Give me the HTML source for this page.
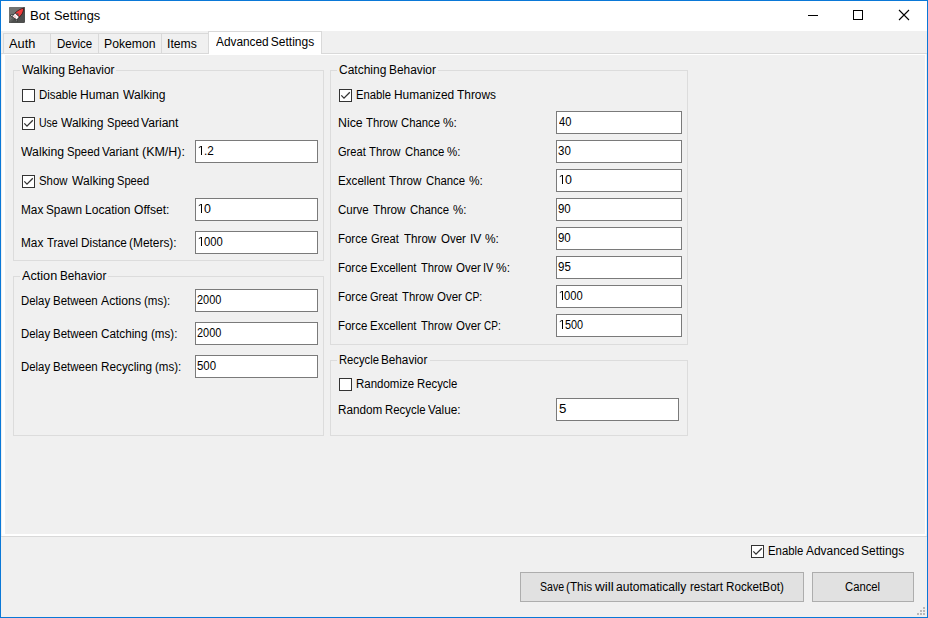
<!DOCTYPE html>
<html><head><meta charset="utf-8">
<style>
html,body{margin:0;padding:0;}
body{width:928px;height:618px;overflow:hidden;position:relative;background:#f0f0f0;font-family:"Liberation Sans",sans-serif;}
.a{position:absolute;box-sizing:border-box;}
.t{position:absolute;white-space:nowrap;font-size:12px;line-height:14px;height:14px;color:#000;transform-origin:0 0;}
.tab{position:absolute;box-sizing:border-box;background:#f0f0f0;border:1px solid #d9d9d9;border-bottom:none;}
.grp{position:absolute;box-sizing:border-box;border:1px solid #dcdcdc;}
.gap{position:absolute;height:3px;background:#f0f0f0;}
.tb{position:absolute;box-sizing:border-box;background:#fff;border:1px solid #7a7a7a;height:23px;}
.cb{position:absolute;box-sizing:border-box;background:#fff;border:1px solid #333;width:13px;height:13px;}
.btn{position:absolute;box-sizing:border-box;background:#e1e1e1;border:1px solid #adadad;}
</style></head><body>
<!-- window frame -->
<div class="a" style="left:0;top:0;width:928px;height:618px;border:1px solid #0a78d7;"></div>
<div class="a" style="left:1px;top:1px;width:926px;height:30px;background:#fff;"></div>
<!-- icon -->
<svg class="a" style="left:9px;top:7px" width="16" height="16" viewBox="0 0 16 16">
<rect x="0" y="0" width="16" height="16" rx="1.2" fill="#4e4f4e"/>
<path d="M1.2,0 L15,0 L0,15 L0,1.2 Z" fill="#727472"/>
<path d="M15,0 L16,0 L16,1 L1,16 L0,16 L0,15 Z" fill="#5e605e"/>
<g stroke="#111" stroke-width="0.65" stroke-linejoin="round">
<path d="M4.8,7.4 L1.1,8.3 L3.2,10.2 Z" fill="#fff"/>
<path d="M8.8,11.6 L7.9,14.4 L6.0,12.3 Z" fill="#fff"/>
<path d="M6.2,5.8 L10.4,9.8 L7.8,12.8 L3.1,9.5 Z" fill="#fbf4f4"/>
<path d="M14.7,1.1 C12,1.6 8.8,3.4 6.2,5.9 L10.4,9.8 C12.9,8.2 14.5,5 14.7,1.1 Z" fill="#f03c3c"/>
</g>
<rect x="7.9" y="6.4" width="1.6" height="1.6" fill="#4a5258" transform="rotate(45 8.7 7.2)"/>
<circle cx="5.8" cy="9.8" r="1.2" fill="#f2c8c8"/>
</svg>
<!-- caption buttons -->
<div class="a" style="left:808px;top:15px;width:10px;height:1px;background:#000;"></div>
<div class="a" style="left:853px;top:10px;width:10px;height:10px;border:1px solid #000;"></div>
<svg class="a" style="left:898px;top:9px" width="12" height="12" viewBox="0 0 12 12"><path d="M1,1 L11,11 M11,1 L1,11" stroke="#000" stroke-width="1.1" fill="none"/></svg>

<!-- tab pane -->
<div class="a" style="left:1px;top:53px;width:926px;height:1px;background:#d9d9d9;"></div>
<div class="a" style="left:2px;top:54px;width:924px;height:482px;background:#fff;"></div>
<div class="a" style="left:5px;top:55px;width:920px;height:479px;background:#f0f0f0;"></div>
<div class="a" style="left:1px;top:536px;width:926px;height:1px;background:#d9d9d9;"></div>
<!-- tabs -->
<div class="tab" style="left:3px;top:33px;width:48px;height:20px;"></div>
<div class="tab" style="left:50px;top:33px;width:49px;height:20px;"></div>
<div class="tab" style="left:98px;top:33px;width:64px;height:20px;"></div>
<div class="tab" style="left:161px;top:33px;width:48px;height:20px;"></div>
<div class="tab" style="left:208px;top:31px;width:114px;height:23px;background:#fff;"></div>

<!-- groups -->
<div class="grp" style="left:13px;top:70px;width:311px;height:191px;"></div>
<div class="gap" style="left:20px;top:69px;width:96px;"></div>
<div class="grp" style="left:13px;top:276px;width:311px;height:160px;"></div>
<div class="gap" style="left:20px;top:275px;width:88px;"></div>
<div class="grp" style="left:330px;top:70px;width:358px;height:275px;"></div>
<div class="gap" style="left:337px;top:69px;width:101px;"></div>
<div class="grp" style="left:330px;top:360px;width:358px;height:76px;"></div>
<div class="gap" style="left:337px;top:359px;width:93px;"></div>

<!-- checkboxes -->
<div class="cb" style="left:22px;top:89px;"></div>
<div class="cb" style="left:22px;top:117px;"></div>
<div class="cb" style="left:22px;top:175px;"></div>
<div class="cb" style="left:339px;top:89px;"></div>
<div class="cb" style="left:339px;top:378px;"></div>
<div class="cb" style="left:751px;top:545px;"></div>
<svg class="a" style="left:22px;top:117px" width="13" height="13" viewBox="0 0 13 13"><path d="M2.3,6.4 L5,9.1 L10.8,3.3" stroke="#333" stroke-width="1.3" fill="none"/></svg>
<svg class="a" style="left:22px;top:175px" width="13" height="13" viewBox="0 0 13 13"><path d="M2.3,6.4 L5,9.1 L10.8,3.3" stroke="#333" stroke-width="1.3" fill="none"/></svg>
<svg class="a" style="left:339px;top:89px" width="13" height="13" viewBox="0 0 13 13"><path d="M2.3,6.4 L5,9.1 L10.8,3.3" stroke="#333" stroke-width="1.3" fill="none"/></svg>
<svg class="a" style="left:751px;top:545px" width="13" height="13" viewBox="0 0 13 13"><path d="M2.3,6.4 L5,9.1 L10.8,3.3" stroke="#333" stroke-width="1.3" fill="none"/></svg>

<!-- textboxes -->
<div class="tb" style="left:195px;top:140px;width:123px;"></div>
<div class="tb" style="left:195px;top:198px;width:123px;"></div>
<div class="tb" style="left:195px;top:231px;width:123px;"></div>
<div class="tb" style="left:195px;top:289px;width:123px;"></div>
<div class="tb" style="left:195px;top:322px;width:123px;"></div>
<div class="tb" style="left:195px;top:355px;width:123px;"></div>
<div class="tb" style="left:556px;top:111px;width:126px;"></div>
<div class="tb" style="left:556px;top:140px;width:126px;"></div>
<div class="tb" style="left:556px;top:169px;width:126px;"></div>
<div class="tb" style="left:556px;top:198px;width:126px;"></div>
<div class="tb" style="left:556px;top:227px;width:126px;"></div>
<div class="tb" style="left:556px;top:256px;width:126px;"></div>
<div class="tb" style="left:556px;top:285px;width:126px;"></div>
<div class="tb" style="left:556px;top:314px;width:126px;"></div>

<div class="tb" style="left:556px;top:398px;width:123px;"></div>

<!-- buttons -->
<div class="btn" style="left:520px;top:572px;width:284px;height:30px;"></div>
<div class="btn" style="left:812px;top:572px;width:102px;height:30px;"></div>
<!-- size grip -->
<div class="a" style="left:923px;top:607px;width:2px;height:2px;background:#b8b8b8;"></div><div class="a" style="left:920px;top:610px;width:2px;height:2px;background:#b8b8b8;"></div><div class="a" style="left:923px;top:610px;width:2px;height:2px;background:#b8b8b8;"></div><div class="a" style="left:917px;top:613px;width:2px;height:2px;background:#b8b8b8;"></div><div class="a" style="left:920px;top:613px;width:2px;height:2px;background:#b8b8b8;"></div><div class="a" style="left:923px;top:613px;width:2px;height:2px;background:#b8b8b8;"></div>

<div class="t" style="left:30.15px;top:9px;transform:scaleX(1.0983)">Bot</div>
<div class="t" style="left:53.58px;top:9px;transform:scaleX(1.0666)">Settings</div>
<div class="t" style="left:8.78px;top:37px;transform:scaleX(1.0655)">Auth</div>
<div class="t" style="left:57.17px;top:37px;transform:scaleX(0.9598)">Device</div>
<div class="t" style="left:104.42px;top:37px;transform:scaleX(1.0189)">Pokemon</div>
<div class="t" style="left:167.26px;top:37px;transform:scaleX(1.0164)">Items</div>
<div class="t" style="left:216.10px;top:35px;transform:scaleX(0.9870)">Advanced</div>
<div class="t" style="left:270.84px;top:35px;transform:scaleX(1.0000)">Settings</div>
<div class="t" style="left:21.94px;top:63px;transform:scaleX(1.0176)">Walking</div>
<div class="t" style="left:67.55px;top:63px;transform:scaleX(0.9794)">Behavior</div>
<div class="t" style="left:39.08px;top:88px;transform:scaleX(0.9520)">Disable</div>
<div class="t" style="left:79.73px;top:88px;transform:scaleX(1.0089)">Human</div>
<div class="t" style="left:122.64px;top:88px;transform:scaleX(1.0080)">Walking</div>
<div class="t" style="left:38.98px;top:116px;transform:scaleX(0.8771)">Use</div>
<div class="t" style="left:61.24px;top:116px;transform:scaleX(1.0031)">Walking</div>
<div class="t" style="left:106.59px;top:116px;transform:scaleX(0.9290)">Speed</div>
<div class="t" style="left:141.49px;top:116px;transform:scaleX(1.0092)">Variant</div>
<div class="t" style="left:21.24px;top:145px;transform:scaleX(1.0201)">Walking</div>
<div class="t" style="left:66.78px;top:145px;transform:scaleX(0.9440)">Speed</div>
<div class="t" style="left:102.20px;top:145px;transform:scaleX(0.9822)">Variant</div>
<div class="t" style="left:142.34px;top:145px;transform:scaleX(1.0387)">(KM/H):</div>
<div class="t" style="left:38.98px;top:174px;transform:scaleX(0.9470)">Show</div>
<div class="t" style="left:71.74px;top:174px;transform:scaleX(1.0080)">Walking</div>
<div class="t" style="left:116.79px;top:174px;transform:scaleX(0.9260)">Speed</div>
<div class="t" style="left:20.85px;top:203px;transform:scaleX(0.9857)">Max</div>
<div class="t" style="left:46.35px;top:203px;transform:scaleX(0.9811)">Spawn</div>
<div class="t" style="left:85.03px;top:203px;transform:scaleX(1.0040)">Location</div>
<div class="t" style="left:133.86px;top:203px;transform:scaleX(1.0076)">Offset:</div>
<div class="t" style="left:20.85px;top:236px;transform:scaleX(0.9857)">Max</div>
<div class="t" style="left:46.71px;top:236px;transform:scaleX(0.9444)">Travel</div>
<div class="t" style="left:80.65px;top:236px;transform:scaleX(0.9819)">Distance</div>
<div class="t" style="left:128.78px;top:236px;transform:scaleX(0.9923)">(Meters):</div>
<div class="t" style="left:21.89px;top:269px;transform:scaleX(1.0556)">Action</div>
<div class="t" style="left:59.85px;top:269px;transform:scaleX(0.9772)">Behavior</div>
<div class="t" style="left:20.88px;top:294px;transform:scaleX(0.9474)">Delay</div>
<div class="t" style="left:53.07px;top:294px;transform:scaleX(0.9587)">Between</div>
<div class="t" style="left:101.19px;top:294px;transform:scaleX(1.0165)">Actions</div>
<div class="t" style="left:143.90px;top:294px;transform:scaleX(0.9624)">(ms):</div>
<div class="t" style="left:20.88px;top:327px;transform:scaleX(0.9474)">Delay</div>
<div class="t" style="left:53.07px;top:327px;transform:scaleX(0.9587)">Between</div>
<div class="t" style="left:101.11px;top:327px;transform:scaleX(0.9808)">Catching</div>
<div class="t" style="left:150.60px;top:327px;transform:scaleX(0.9663)">(ms):</div>
<div class="t" style="left:20.88px;top:360px;transform:scaleX(0.9474)">Delay</div>
<div class="t" style="left:53.07px;top:360px;transform:scaleX(0.9587)">Between</div>
<div class="t" style="left:101.05px;top:360px;transform:scaleX(0.9795)">Recycling</div>
<div class="t" style="left:155.00px;top:360px;transform:scaleX(0.9624)">(ms):</div>
<div class="t" style="left:339.00px;top:63px;transform:scaleX(1.0003)">Catching</div>
<div class="t" style="left:389.04px;top:63px;transform:scaleX(0.9902)">Behavior</div>
<div class="t" style="left:355.89px;top:88px;transform:scaleX(0.9406)">Enable</div>
<div class="t" style="left:393.84px;top:88px;transform:scaleX(0.9921)">Humanized</div>
<div class="t" style="left:456.70px;top:88px;transform:scaleX(0.9908)">Throws</div>
<div class="t" style="left:337.91px;top:116px;transform:scaleX(1.0285)">Nice</div>
<div class="t" style="left:365.80px;top:116px;transform:scaleX(0.9464)">Throw</div>
<div class="t" style="left:400.84px;top:116px;transform:scaleX(0.9427)">Chance</div>
<div class="t" style="left:442.56px;top:116px;transform:scaleX(0.9892)">%:</div>
<div class="t" style="left:338.14px;top:145px;transform:scaleX(0.9235)">Great</div>
<div class="t" style="left:369.20px;top:145px;transform:scaleX(0.9464)">Throw</div>
<div class="t" style="left:404.93px;top:145px;transform:scaleX(0.9501)">Chance</div>
<div class="t" style="left:446.87px;top:145px;transform:scaleX(0.9578)">%:</div>
<div class="t" style="left:337.86px;top:174px;transform:scaleX(0.9687)">Excellent</div>
<div class="t" style="left:389.10px;top:174px;transform:scaleX(0.9735)">Throw</div>
<div class="t" style="left:426.43px;top:174px;transform:scaleX(0.9452)">Chance</div>
<div class="t" style="left:469.26px;top:174px;transform:scaleX(0.9892)">%:</div>
<div class="t" style="left:337.83px;top:203px;transform:scaleX(0.9605)">Curve</div>
<div class="t" style="left:372.60px;top:203px;transform:scaleX(0.9765)">Throw</div>
<div class="t" style="left:409.63px;top:203px;transform:scaleX(0.9452)">Chance</div>
<div class="t" style="left:453.37px;top:203px;transform:scaleX(0.9578)">%:</div>
<div class="t" style="left:337.87px;top:232px;transform:scaleX(0.9550)">Force</div>
<div class="t" style="left:371.04px;top:232px;transform:scaleX(0.9268)">Great</div>
<div class="t" style="left:403.60px;top:232px;transform:scaleX(0.9675)">Throw</div>
<div class="t" style="left:440.78px;top:232px;transform:scaleX(0.9585)">Over</div>
<div class="t" style="left:469.77px;top:232px;transform:scaleX(1.0096)">IV</div>
<div class="t" style="left:484.56px;top:232px;transform:scaleX(0.9892)">%:</div>
<div class="t" style="left:337.87px;top:261px;transform:scaleX(0.9550)">Force</div>
<div class="t" style="left:370.47px;top:261px;transform:scaleX(0.9561)">Excellent</div>
<div class="t" style="left:421.01px;top:261px;transform:scaleX(0.9314)">Throw</div>
<div class="t" style="left:455.78px;top:261px;transform:scaleX(0.9585)">Over</div>
<div class="t" style="left:483.27px;top:261px;transform:scaleX(0.9206)">IV</div>
<div class="t" style="left:496.15px;top:261px;transform:scaleX(0.9970)">%:</div>
<div class="t" style="left:337.87px;top:290px;transform:scaleX(0.9550)">Force</div>
<div class="t" style="left:369.85px;top:290px;transform:scaleX(0.9167)">Great</div>
<div class="t" style="left:401.71px;top:290px;transform:scaleX(0.9434)">Throw</div>
<div class="t" style="left:436.69px;top:290px;transform:scaleX(0.9546)">Over</div>
<div class="t" style="left:464.78px;top:290px;transform:scaleX(0.8609)">CP:</div>
<div class="t" style="left:337.87px;top:319px;transform:scaleX(0.9550)">Force</div>
<div class="t" style="left:370.47px;top:319px;transform:scaleX(0.9561)">Excellent</div>
<div class="t" style="left:421.11px;top:319px;transform:scaleX(0.9314)">Throw</div>
<div class="t" style="left:456.19px;top:319px;transform:scaleX(0.9546)">Over</div>
<div class="t" style="left:484.30px;top:319px;transform:scaleX(0.8340)">CP:</div>
<div class="t" style="left:338.99px;top:353px;transform:scaleX(0.9366)">Recycle</div>
<div class="t" style="left:381.45px;top:353px;transform:scaleX(0.9772)">Behavior</div>
<div class="t" style="left:355.87px;top:377px;transform:scaleX(0.9575)">Randomize</div>
<div class="t" style="left:416.98px;top:377px;transform:scaleX(0.9439)">Recycle</div>
<div class="t" style="left:337.95px;top:403px;transform:scaleX(0.9761)">Random</div>
<div class="t" style="left:384.88px;top:403px;transform:scaleX(0.9487)">Recycle</div>
<div class="t" style="left:427.60px;top:403px;transform:scaleX(0.9850)">Value:</div>
<div class="t" style="left:767.68px;top:544px;transform:scaleX(0.9461)">Enable</div>
<div class="t" style="left:806.10px;top:544px;transform:scaleX(0.9946)">Advanced</div>
<div class="t" style="left:861.04px;top:544px;transform:scaleX(0.9977)">Settings</div>
<div class="t" style="left:539.83px;top:580px;transform:scaleX(0.8803)">Save</div>
<div class="t" style="left:566.09px;top:580px;transform:scaleX(0.9810)">(This</div>
<div class="t" style="left:594.63px;top:580px;transform:scaleX(1.1269)">will</div>
<div class="t" style="left:616.27px;top:580px;transform:scaleX(1.0030)">automatically</div>
<div class="t" style="left:689.79px;top:580px;transform:scaleX(0.9691)">restart</div>
<div class="t" style="left:725.56px;top:580px;transform:scaleX(0.9732)">RocketBot)</div>
<div class="t" style="left:844.94px;top:580px;transform:scaleX(0.9402)">Cancel</div>
<svg class="a" style="left:198px;top:146px" width="5" height="9" viewBox="0 0 5 9"><path d="M3.5,0 L3.5,9" stroke="#000" stroke-width="1.05"/><path d="M0.8,1.6 L3.3,0.3" stroke="#000" stroke-width="0.95"/></svg>
<div class="t" style="left:203.71px;top:144px;transform:scaleX(0.9786)">.2</div>
<svg class="a" style="left:198px;top:204px" width="5" height="9" viewBox="0 0 5 9"><path d="M3.5,0 L3.5,9" stroke="#000" stroke-width="1.05"/><path d="M0.8,1.6 L3.3,0.3" stroke="#000" stroke-width="0.95"/></svg>
<div class="t" style="left:203.63px;top:202px;transform:scaleX(1.0348)">0</div>
<svg class="a" style="left:198px;top:237px" width="5" height="9" viewBox="0 0 5 9"><path d="M3.5,0 L3.5,9" stroke="#000" stroke-width="1.05"/><path d="M0.8,1.6 L3.3,0.3" stroke="#000" stroke-width="0.95"/></svg>
<div class="t" style="left:203.88px;top:235px;transform:scaleX(0.9359)">000</div>
<div class="t" style="left:197.46px;top:293px;transform:scaleX(0.9124)">2000</div>
<div class="t" style="left:197.46px;top:326px;transform:scaleX(0.9124)">2000</div>
<div class="t" style="left:197.35px;top:359px;transform:scaleX(0.9529)">500</div>
<div class="t" style="left:558.79px;top:115px;transform:scaleX(0.9276)">40</div>
<div class="t" style="left:558.40px;top:144px;transform:scaleX(0.9573)">30</div>
<svg class="a" style="left:559px;top:175px" width="5" height="9" viewBox="0 0 5 9"><path d="M3.5,0 L3.5,9" stroke="#000" stroke-width="1.05"/><path d="M0.8,1.6 L3.3,0.3" stroke="#000" stroke-width="0.95"/></svg>
<div class="t" style="left:564.63px;top:173px;transform:scaleX(1.0348)">0</div>
<div class="t" style="left:558.42px;top:202px;transform:scaleX(0.9552)">90</div>
<div class="t" style="left:558.42px;top:231px;transform:scaleX(0.9552)">90</div>
<div class="t" style="left:558.42px;top:260px;transform:scaleX(0.9587)">95</div>
<svg class="a" style="left:559px;top:291px" width="5" height="9" viewBox="0 0 5 9"><path d="M3.5,0 L3.5,9" stroke="#000" stroke-width="1.05"/><path d="M0.8,1.6 L3.3,0.3" stroke="#000" stroke-width="0.95"/></svg>
<div class="t" style="left:564.38px;top:289px;transform:scaleX(0.9307)">000</div>
<svg class="a" style="left:559px;top:320px" width="5" height="9" viewBox="0 0 5 9"><path d="M3.5,0 L3.5,9" stroke="#000" stroke-width="1.05"/><path d="M0.8,1.6 L3.3,0.3" stroke="#000" stroke-width="0.95"/></svg>
<div class="t" style="left:564.88px;top:318px;transform:scaleX(0.9052)">500</div>
<div class="t" style="left:559.04px;top:402px;transform:scaleX(1.1063)">5</div>
</body></html>
